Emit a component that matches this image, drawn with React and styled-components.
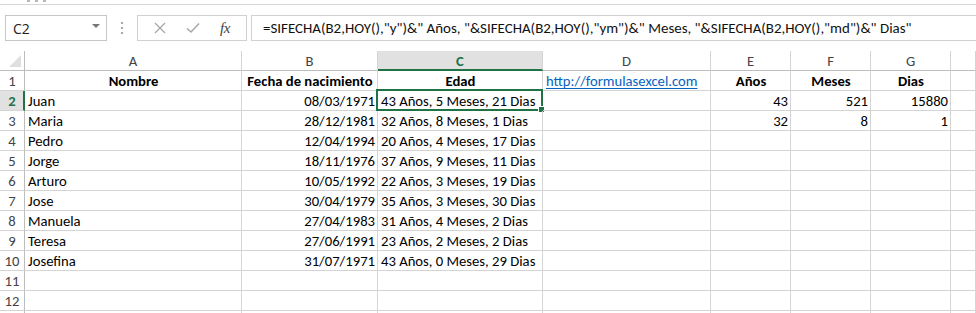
import React from "react";
import styled, { createGlobalStyle } from "styled-components";

const Global = createGlobalStyle`
  html, body { margin: 0; padding: 0; background: #fff; }
  body { width: 976px; height: 313px; overflow: hidden; }
`;

const CELL_FONT = `"Carlito", "Lato", "Liberation Sans", sans-serif`;
const UI_FONT = `"Open Sans", "Noto Sans", "Liberation Sans", sans-serif`;
const GREEN = "#217346";
const GRID = "#d4d4d4";

const Page = styled.div`
  display: flex;
  flex-direction: column;
  width: 976px;
  height: 313px;
  overflow: hidden;
  & > * { flex-shrink: 0; }
`;

const TopStrip = styled.div`
  height: 4px;
  border-bottom: 1px solid #d5d5d5;
`;

const RibbonBits = styled.div`
  display: flex;
  gap: 5px;
  padding-left: 27px;
  span {
    width: 3px;
    height: 2px;
    background: #b8b8b8;
  }
`;

const FormulaBar = styled.div`
  display: flex;
  align-items: stretch;
  height: 46px;
  box-sizing: border-box;
  padding: 10px 0 10px 5px;
`;

const NameBox = styled.div`
  width: 102px;
  box-sizing: border-box;
  border: 1px solid #c6c6c6;
  display: flex;
  align-items: center;
  justify-content: space-between;
  padding: 0 6px 0 7px;
  font-family: ${UI_FONT};
  font-size: 14px;
  color: #222;
`;

const Caret = styled.span`
  width: 0;
  height: 0;
  border-left: 4px solid transparent;
  border-right: 4px solid transparent;
  border-top: 4px solid #777;
  margin-top: -4px;
`;

const Dots = styled.div`
  width: 30px;
  display: flex;
  flex-direction: column;
  align-items: center;
  justify-content: center;
  gap: 3px;
  span {
    width: 2px;
    height: 2px;
    background: #a6a6a6;
  }
`;

const FxBox = styled.div`
  width: 110px;
  box-sizing: border-box;
  border: 1px solid #d0d0d0;
  display: flex;
  align-items: center;
  justify-content: space-around;
  padding: 0 6px 0 6px;
`;

const FxText = styled.span`
  font-family: "Liberation Serif", "DejaVu Serif", serif;
  font-style: italic;
  font-size: 15px;
  color: #444;
  letter-spacing: -0.5px;
`;

const FormulaInput = styled.div`
  flex: 1;
  margin-left: 4px;
  box-sizing: border-box;
  border: 1px solid #d0d0d0;
  border-right: none;
  display: flex;
  align-items: center;
  padding-left: 11px;
  font-family: ${CELL_FONT};
  font-size: 14.95px;
  color: #111;
  white-space: pre;
`;

const Sheet = styled.div`
  display: grid;
  grid-template-columns: 25px 217px 136px 165px 168px 80px 80px 80px 1fr;
  grid-auto-rows: 20px;
`;

const Corner = styled.div`
  position: relative;
  box-sizing: border-box;
  border-right: 1px solid #bdbdbd;
  border-bottom: 1px solid #bdbdbd;
  &::after {
    content: "";
    position: absolute;
    right: 3px;
    bottom: 3px;
    width: 0;
    height: 0;
    border-left: 12px solid transparent;
    border-bottom: 12px solid #dfdfdf;
  }
`;

const ColHead = styled.div`
  box-sizing: border-box;
  border-right: 1px solid ${GRID};
  border-bottom: ${(p) => (p.$active ? `2px solid ${GREEN}` : "1px solid #bdbdbd")};
  background: ${(p) => (p.$active ? "#e1e1e1" : "#fff")};
  color: ${(p) => (p.$active ? GREEN : "#444")};
  font-weight: ${(p) => (p.$active ? 700 : 400)};
  font-family: ${CELL_FONT};
  font-size: 14.67px;
  display: flex;
  align-items: center;
  justify-content: center;
  padding-top: ${(p) => (p.$active ? "1px" : "0")};
`;

const RowHead = styled.div`
  box-sizing: border-box;
  border-right: ${(p) => (p.$active ? `2px solid ${GREEN}` : "1px solid #bdbdbd")};
  border-bottom: 1px solid ${GRID};
  background: ${(p) => (p.$active ? "#e1e1e1" : "#fff")};
  color: ${(p) => (p.$active ? GREEN : "#444")};
  font-weight: ${(p) => (p.$active ? 700 : 400)};
  font-family: ${CELL_FONT};
  font-size: 14.67px;
  display: flex;
  align-items: center;
  justify-content: center;
  padding-left: ${(p) => (p.$active ? "1px" : "0")};
`;

const Cell = styled.div`
  position: relative;
  box-sizing: border-box;
  border-right: 1px solid ${GRID};
  border-bottom: 1px solid ${GRID};
  font-family: ${CELL_FONT};
  font-size: 14.67px;
  line-height: 20px;
  padding: 0 2px 0 3px;
  white-space: nowrap;
  overflow: visible;
  text-align: ${(p) => p.$align || "left"};
  font-weight: ${(p) => (p.$bold ? 700 : 400)};
  color: #000;
`;

const Link = styled.span`
  color: #0563c1;
  text-decoration: underline;
  text-underline-offset: 2px;
`;

const Selection = styled.div`
  position: absolute;
  left: -2px;
  top: -2px;
  right: -1px;
  bottom: -1px;
  border: 2px solid ${GREEN};
  pointer-events: none;
`;

const Handle = styled.div`
  position: absolute;
  right: -4px;
  bottom: -4px;
  width: 5px;
  height: 5px;
  background: ${GREEN};
  border: 1px solid #fff;
`;

const cols = ["A", "B", "C", "D", "E", "F", "G", ""];

const people = [
  ["Juan", "08/03/1971", "43 Años, 5 Meses, 21 Dias"],
  ["Maria", "28/12/1981", "32 Años, 8 Meses, 1 Dias"],
  ["Pedro", "12/04/1994", "20 Años, 4 Meses, 17 Dias"],
  ["Jorge", "18/11/1976", "37 Años, 9 Meses, 11 Dias"],
  ["Arturo", "10/05/1992", "22 Años, 3 Meses, 19 Dias"],
  ["Jose", "30/04/1979", "35 Años, 3 Meses, 30 Dias"],
  ["Manuela", "27/04/1983", "31 Años, 4 Meses, 2 Dias"],
  ["Teresa", "27/06/1991", "23 Años, 2 Meses, 2 Dias"],
  ["Josefina", "31/07/1971", "43 Años, 0 Meses, 29 Dias"],
];

const extras = [
  ["43", "521", "15880"],
  ["32", "8", "1"],
];

const formula =
  '=SIFECHA(B2,HOY(),"y")&" Años, "&SIFECHA(B2,HOY(),"ym")&" Meses, "&SIFECHA(B2,HOY(),"md")&" Dias"';

function CheckIcon() {
  return (
    <svg width="14" height="12" viewBox="0 0 14 12">
      <path d="M1 6.5 L5 10 L13 1.5" fill="none" stroke="#a8a8a8" strokeWidth="1.6" />
    </svg>
  );
}

function CrossIcon() {
  return (
    <svg width="12" height="12" viewBox="0 0 12 12">
      <path d="M1 1 L11 11 M11 1 L1 11" fill="none" stroke="#a8a8a8" strokeWidth="1.3" />
    </svg>
  );
}

export default function App() {
  const rows = [];
  rows.push(
    <React.Fragment key="r1">
      <RowHead>1</RowHead>
      <Cell $align="center" $bold>Nombre</Cell>
      <Cell $align="center" $bold>Fecha de nacimiento</Cell>
      <Cell $align="center" $bold>Edad</Cell>
      <Cell><Link>http://formulasexcel.com</Link></Cell>
      <Cell $align="center" $bold>Años</Cell>
      <Cell $align="center" $bold>Meses</Cell>
      <Cell $align="center" $bold>Dias</Cell>
      <Cell />
    </React.Fragment>
  );
  people.forEach((p, i) => {
    const n = i + 2;
    const ex = extras[i] || ["", "", ""];
    rows.push(
      <React.Fragment key={"r" + n}>
        <RowHead $active={n === 2}>{n}</RowHead>
        <Cell>{p[0]}</Cell>
        <Cell $align="right">{p[1]}</Cell>
        <Cell>
          {p[2]}
          {n === 2 && (
            <Selection>
              <Handle />
            </Selection>
          )}
        </Cell>
        <Cell />
        <Cell $align="right">{ex[0]}</Cell>
        <Cell $align="right">{ex[1]}</Cell>
        <Cell $align="right">{ex[2]}</Cell>
        <Cell />
      </React.Fragment>
    );
  });
  [11, 12, 13].forEach((n) => {
    rows.push(
      <React.Fragment key={"r" + n}>
        <RowHead>{n < 13 ? n : ""}</RowHead>
        {cols.map((c, j) => (
          <Cell key={j} />
        ))}
      </React.Fragment>
    );
  });

  return (
    <Page>
      <Global />
      <TopStrip>
        <RibbonBits>
          <span />
          <span />
          <span />
        </RibbonBits>
      </TopStrip>
      <FormulaBar>
        <NameBox>
          <span>C2</span>
          <Caret />
        </NameBox>
        <Dots>
          <span />
          <span />
          <span />
        </Dots>
        <FxBox>
          <CrossIcon />
          <CheckIcon />
          <FxText>fx</FxText>
        </FxBox>
        <FormulaInput>{formula}</FormulaInput>
      </FormulaBar>
      <Sheet>
        <Corner />
        {cols.map((c, i) => (
          <ColHead key={i} $active={c === "C"}>
            {c}
          </ColHead>
        ))}
        {rows}
      </Sheet>
    </Page>
  );
}
